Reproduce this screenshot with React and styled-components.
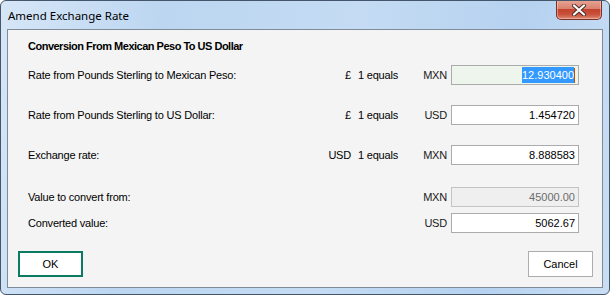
import React from 'react';
import styled, { createGlobalStyle } from 'styled-components';

const Global = createGlobalStyle`
    html, body { margin: 0; padding: 0; background: #ffffff; }
    * { box-sizing: border-box; }
`

const Window = styled.div`
    width: 610px;
    height: 295px;
    display: flex;
    flex-direction: column;
    padding: 0 6px 6px 6px;
    border: 1px solid #44566b;
    border-radius: 6px;
    background: linear-gradient(100deg, #d6e6f7 0%, #bcd6f1 25%, #c4dbf3 55%, #b6d2f0 80%, #c9def4 100%);
    font-family: "Liberation Sans", Arial, sans-serif;
    overflow: hidden;
`

const TitleBar = styled.div`
    height: 28px;
    display: flex;
    align-items: flex-start;
    justify-content: space-between;
`

const Title = styled.div`
    margin-top: 7px;
    margin-left: 1px;
    font-family: "Noto Sans", "Open Sans", sans-serif;
    font-size: 11.5px;
    line-height: 16px;
    color: #000;
`

const CloseButton = styled.div`
    width: 46px;
    height: 20px;
    margin-top: -1px;
    margin-right: 1px;
    display: flex;
    align-items: center;
    justify-content: center;
    border: 1px solid #7a2f28;
    border-top: none;
    border-radius: 0 0 5px 5px;
    background: linear-gradient(180deg, #e9a597 0%, #d9826f 45%, #c4432f 50%, #c9503a 75%, #de8a72 100%);
    box-shadow: inset 0 0 0 1px rgba(255, 220, 210, 0.45);
`

const Client = styled.div`
    flex: 1;
    display: flex;
    flex-direction: column;
    border: 1px solid #7f8b98;
    background: #f4f4f4;
    font-size: 11px;
    color: #000;
`

const Form = styled.div`
    display: flex;
    flex-direction: column;
    padding: 9px 23px 0 20px;
`

const Heading = styled.div`
    font-weight: bold;
    font-size: 11px;
    line-height: 14px;
    letter-spacing: -0.5px;
`

const Row = styled.div`
    height: 20px;
    margin-top: ${p => p.$gap}px;
    display: flex;
    align-items: center;
    white-space: nowrap;
`

const Label = styled.div`
    flex: 1;
    line-height: 14px;
    letter-spacing: -0.2px;
`

const Symbol = styled.div`
    width: 33px;
    text-align: right;
    line-height: 14px;
    letter-spacing: -0.2px;
`

const Equals = styled.div`
    width: 47px;
    padding-left: 7px;
    line-height: 14px;
    letter-spacing: -0.2px;
`

const Currency = styled.div`
    width: 49px;
    text-align: right;
    line-height: 14px;
    letter-spacing: -0.2px;
    color: #1a1a1a;
`

const Field = styled.div`
    width: 128px;
    height: 20px;
    margin-left: 4px;
    padding: 0 3px 0 4px;
    display: flex;
    align-items: center;
    justify-content: flex-end;
    border: 1px solid ${p => (p.$disabled ? '#c4c4c4' : '#ababab')};
    background: ${p => (p.$focused ? '#eef5ec' : p.$disabled ? '#efefef' : '#ffffff')};
    color: ${p => (p.$disabled ? '#6d6d6d' : '#000000')};
    font-size: 11px;
    line-height: 14px;
`

const Selected = styled.span`
    background: #3399ff;
    color: #ffffff;
    padding: 1px 0;
`

const Caret = styled.span`
    width: 1px;
    height: 15px;
    background: #c05000;
`

const ButtonBar = styled.div`
    display: flex;
    justify-content: space-between;
    padding: 0 9px 0 10px;
    margin-top: 18px;
`

const Button = styled.div`
    width: 65px;
    height: 26px;
    display: flex;
    align-items: center;
    justify-content: center;
    background: #ffffff;
    border: ${p => (p.$default ? '2px solid #0b7a62' : '1px solid #adadad')};
    font-size: 11px;
    color: #000;
`

const rows = [
    { label: 'Rate from Pounds Sterling to Mexican Peso:', symbol: '£', equals: true, currency: 'MXN', value: '12.930400', focused: true, gap: 12 },
    { label: 'Rate from Pounds Sterling to US Dollar:', symbol: '£', equals: true, currency: 'USD', value: '1.454720', gap: 20 },
    { label: 'Exchange rate:', symbol: 'USD', equals: true, currency: 'MXN', value: '8.888583', gap: 20 },
    { label: 'Value to convert from:', currency: 'MXN', value: '45000.00', disabled: true, gap: 22 },
    { label: 'Converted value:', currency: 'USD', value: '5062.67', gap: 6 },
]

const CloseGlyph = () => (
    <svg width="14" height="12" viewBox="0 0 14 12">
        <path d="M2 1.5 L12 10.5 M12 1.5 L2 10.5" stroke="#4a2a26" strokeWidth="4" strokeLinecap="round" />
        <path d="M2 1.5 L12 10.5 M12 1.5 L2 10.5" stroke="#ffffff" strokeWidth="2.2" strokeLinecap="round" />
    </svg>
)

const App = () => {
    return (
        <>
            <Global />
            <Window>
                <TitleBar>
                    <Title>Amend Exchange Rate</Title>
                    <CloseButton><CloseGlyph /></CloseButton>
                </TitleBar>
                <Client>
                    <Form>
                        <Heading>Conversion From Mexican Peso To US Dollar</Heading>
                        {rows.map(r => (
                            <Row key={r.label} $gap={r.gap}>
                                <Label>{r.label}</Label>
                                <Symbol>{r.symbol}</Symbol>
                                <Equals>{r.equals ? '1 equals' : ''}</Equals>
                                <Currency>{r.currency}</Currency>
                                <Field $focused={r.focused} $disabled={r.disabled}>
                                    {r.focused ? <><Selected>{r.value}</Selected><Caret /></> : r.value}
                                </Field>
                            </Row>
                        ))}
                    </Form>
                    <ButtonBar>
                        <Button $default>OK</Button>
                        <Button>Cancel</Button>
                    </ButtonBar>
                </Client>
            </Window>
        </>
    );
}

export default App;
